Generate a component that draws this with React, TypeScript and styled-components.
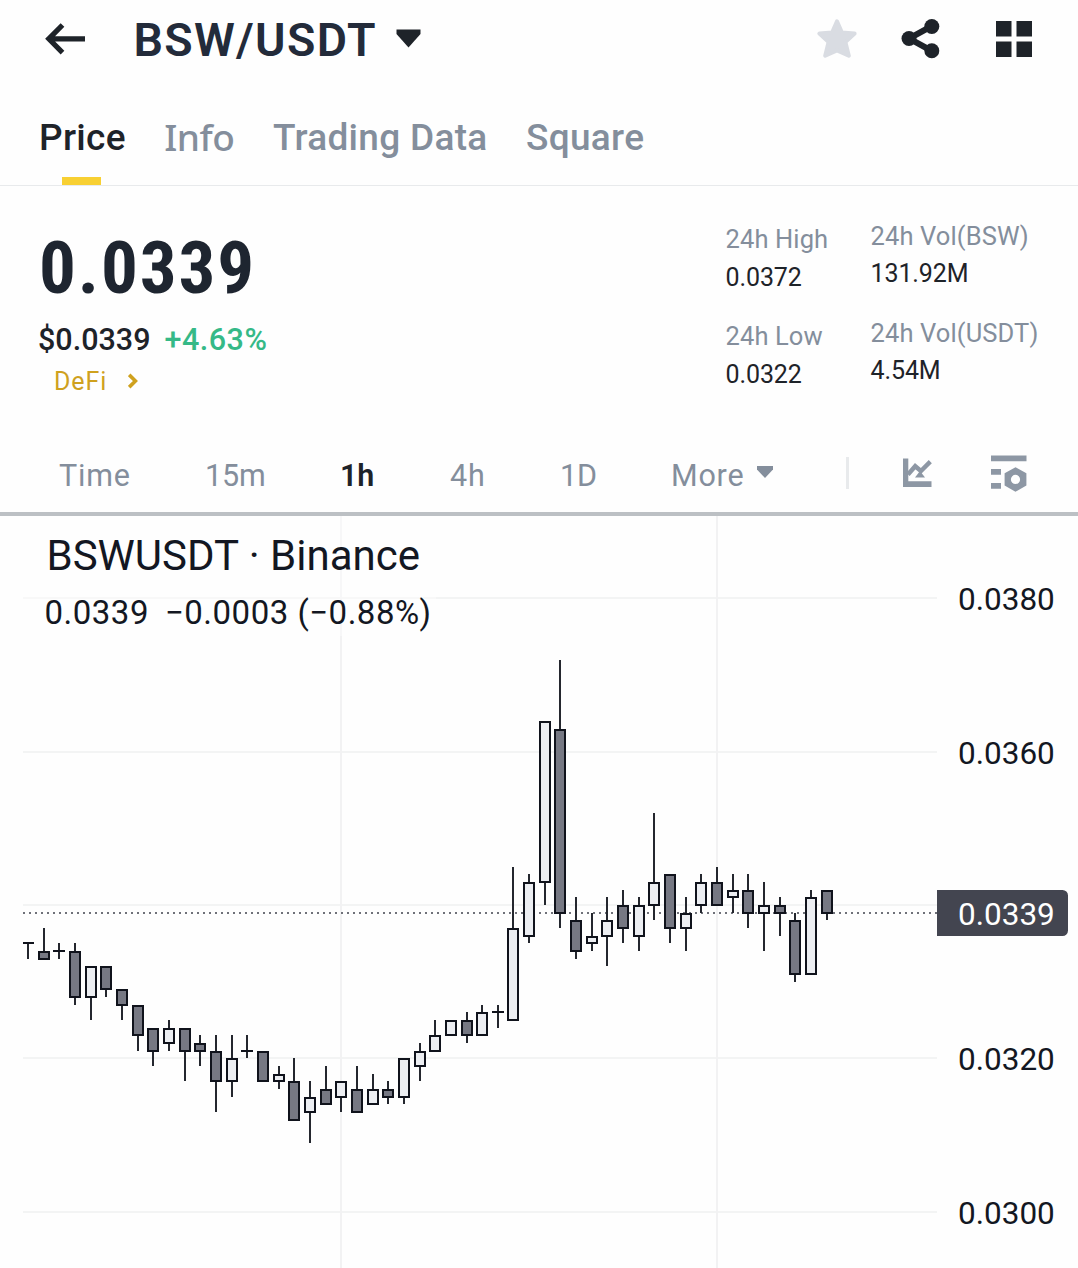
import React from 'react';
import styled, { createGlobalStyle } from 'styled-components';

const GlobalStyle = createGlobalStyle`
  * { box-sizing: border-box; }
  body { margin: 0; background: #fefefe; }
`;

const Screen = styled.main`
  width: 1078px;
  height: 1268px;
  overflow: hidden;
  display: flex;
  flex-direction: column;
  background: #fefefe;
  color: #1e2329;
  font-family: Roboto, "Liberation Sans", sans-serif;
  white-space: nowrap;
  svg { display: block; flex: none; }
`;

const Header = styled.header`
  display: flex;
  align-items: center;
  height: 77px;
  padding: 0 46.5px 0 45px;
`;

const PairTitle = styled.h1`
  margin: 0 19px 0 47.5px;
  padding-top: 3px;
  font-size: 46.5px;
  font-weight: 560;
  line-height: 56px;
  letter-spacing: 1.3px;
  color: #232b3a;
`;

const HeaderActions = styled.div`
  display: flex;
  align-items: center;
  margin-left: auto;
`;

const ActionIcon = styled.div<{ $gap?: number }>`
  margin-left: ${(p) => p.$gap ?? 0}px;
`;

const Tabs = styled.nav`
  display: flex;
  gap: 38.5px;
  height: 109px;
  padding: 39px 39px 0;
  border-bottom: 1px solid #e8eaec;
`;

const Tab = styled.div<{ $active?: boolean; $serifed?: boolean }>`
  position: relative;
  font-family: ${(p) => (p.$serifed ? '"Noto Sans", ' : '')}Roboto, sans-serif;
  font-size: 37px;
  font-weight: ${(p) => (p.$serifed ? 500 : 460)};
  line-height: ${(p) => (p.$serifed ? 42 : 44)}px;
  letter-spacing: ${(p) => (p.$serifed ? -0.5 : 0.3)}px;
  color: ${(p) => (p.$active ? '#1e2329' : '#848e9c')};
`;

const TabMarker = styled.span`
  position: absolute;
  left: 23px;
  bottom: 0;
  width: 39px;
  height: 8px;
  background: #f8d033;
`;

const Summary = styled.section`
  display: flex;
  justify-content: space-between;
  height: 248px;
  padding: 35px 39.5px 0 39px;
`;

const PriceBlock = styled.div`
  padding-top: 7px;
`;

const LastPrice = styled.div`
  font-size: 73px;
  font-weight: 700;
  font-stretch: 75%;
  line-height: 80px;
  letter-spacing: 1.9px;
  color: #1e2530;
`;

const FiatRow = styled.div`
  display: flex;
  gap: 14px;
  margin: 14px 0 0 -1px;
  font-size: 30.5px;
  font-weight: 500;
  line-height: 36px;
`;

const Change = styled.span`
  letter-spacing: 0.5px;
  color: #35b987;
`;

const TagLink = styled.div`
  display: flex;
  align-items: center;
  gap: 21px;
  margin-top: 9px;
  padding-left: 15px;
  font-size: 25px;
  line-height: 30px;
  letter-spacing: 0.9px;
  color: #cfa11e;
  svg { margin-top: -3px; }
`;

const StatColumns = styled.div`
  display: flex;
`;

const StatColumn = styled.div<{ $width: number; $offset?: number }>`
  width: ${(p) => p.$width}px;
  padding-top: ${(p) => p.$offset ?? 0}px;
`;

const Stat = styled.dl<{ $height: number }>`
  margin: 0;
  height: ${(p) => p.$height}px;
`;

const StatLabel = styled.dt`
  font-size: 25.5px;
  line-height: 30px;
  letter-spacing: 0.12px;
  color: #848e9c;
`;

const StatValue = styled.dd<{ $gap: number }>`
  margin: ${(p) => p.$gap}px 0 0;
  font-size: 25px;
  line-height: 30px;
  letter-spacing: -0.1px;
`;

const IntervalBar = styled.div`
  display: flex;
  align-items: center;
  height: 82px;
  padding: 0 51px 0 59px;
  border-bottom: 4px solid #bcc0c4;
`;

const Intervals = styled.div`
  display: grid;
  grid-template-columns: 146px 135px 110px 110px 111px auto;
  padding-top: 5px;
`;

const Interval = styled.div<{ $active?: boolean; $tight?: boolean }>`
  display: flex;
  align-items: center;
  gap: 13px;
  font-size: 30.5px;
  font-weight: ${(p) => (p.$active ? 600 : 400)};
  line-height: 36px;
  letter-spacing: ${(p) => (p.$tight ? -0.1 : 0.8)}px;
  color: ${(p) => (p.$active ? '#1e2329' : '#848e9c')};
  svg { margin-top: -8px; }
`;

const BarTools = styled.div`
  display: flex;
  align-items: center;
  margin-left: auto;
`;

const Divider = styled.span`
  width: 3px;
  height: 32px;
  margin-right: 54px;
  background: #e8eaec;
`;

const ToolGap = styled.span`
  width: 59px;
`;

const ChartArea = styled.section`
  position: relative;
  flex: 1;
`;

const Legend = styled.div`
  position: absolute;
  left: 0;
  top: 0;
  padding: 12px 4px 0 47px;
  background: rgba(255, 255, 255, 0.4);
  color: #131722;
`;

const LegendTitle = styled.div`
  font-size: 42px;
  line-height: 56px;
  margin-left: -0.5px;
`;

const LegendValues = styled.div`
  display: flex;
  gap: 16px;
  padding-top: 6px;
  font-size: 33px;
  line-height: 46px;
  letter-spacing: 0.5px;
  margin-left: -2.5px;
`;

/* Prices are in units of 0.0001: [open, high, low, close] */
type Candle = [number, number, number, number];

const candles: Candle[] = [
  [335, 335, 333, 335], [334, 337, 333, 333], [334, 335, 333, 334], [334, 335, 327, 328],
  [328, 332, 325, 332], [332, 332, 328, 329], [329, 329, 325, 327], [327, 327, 321, 323],
  [324, 324, 319, 321], [322, 325, 321, 324], [324, 324, 317, 321], [322, 323, 319, 321],
  [321, 323, 313, 317], [317, 323, 315, 320], [321, 323, 320, 321], [321, 321, 317, 317],
  [317, 319, 316, 318], [317, 320, 312, 312], [313, 317, 309, 315], [316, 319, 314, 314],
  [315, 317, 313, 317], [316, 319, 313, 313], [314, 318, 314, 316], [316, 317, 314, 315],
  [315, 320, 314, 320], [319, 322, 317, 321], [321, 325, 321, 323], [323, 325, 323, 325],
  [325, 326, 322, 323], [323, 327, 323, 326], [326, 327, 324, 326], [325, 345, 325, 337],
  [336, 344, 335, 343], [343, 364, 340, 364], [363, 372, 337, 339], [338, 341, 333, 334],
  [335, 339, 334, 336], [336, 341, 332, 338], [340, 342, 335, 337], [336, 341, 334, 340],
  [340, 352, 338, 343], [344, 344, 335, 337], [337, 341, 334, 339], [340, 344, 339, 343],
  [343, 345, 340, 340], [341, 344, 339, 342], [342, 344, 337, 339], [339, 343, 334, 340],
  [340, 341, 336, 339], [338, 339, 330, 331], [331, 342, 331, 341], [342, 342, 338, 339],
];

const CHART_HEIGHT = 752;
const priceY = (p: number) => Math.floor(82.4 + (380 - p) * 7.67 + 0.35);
const candleX = (i: number) => Math.round(28 + i * 15.661);

function CandleMark({ index, candle }: { index: number; candle: Candle }) {
  const [open, high, low, close] = candle;
  const x = candleX(index);
  const top = priceY(Math.max(open, close));
  const bottom = priceY(Math.min(open, close));
  return (
    <g>
      <rect x={x - 1} y={priceY(high)} width={2} height={priceY(low) - priceY(high)} fill="#24272e" />
      {open === close ? (
        <rect x={index === 0 ? 23 : x - 6} y={top - 1} width={index === 0 ? 11 : 12} height={2} fill="#10131c" />
      ) : (
        <rect
          x={x - 5} y={top + 1} width={10} height={bottom - top - 1}
          fill={close < open ? '#767883' : '#eceef2'} stroke="#10131c" strokeWidth={2}
        />
      )}
    </g>
  );
}

function CandleChart() {
  const last = priceY(339);
  return (
    <svg width={1078} height={CHART_HEIGHT} viewBox={`0 0 1078 ${CHART_HEIGHT}`} shapeRendering="crispEdges">
      {[380, 360, 340, 320, 300].map((p) => (
        <rect key={p} x={23} y={priceY(p) - 1} width={914} height={2} fill="#f3f4f4" />
      ))}
      {[20, 44].map((i) => (
        <rect key={i} x={candleX(i) - 1} y={0} width={2} height={CHART_HEIGHT} fill="#f2f2f3" />
      ))}
      <line x1={23} x2={937} y1={last} y2={last} stroke="#6f7179" strokeWidth={2} strokeDasharray="2 4" />
      {candles.map((c, i) => <CandleMark key={i} index={i} candle={c} />)}
      <path
        d={`M937 ${last - 23}h125.500a5.500 5.500 0 0 1 5.500 5.500v35a5.500 5.500 0 0 1 -5.500 5.500H937z`}
        fill="#434550" shapeRendering="auto"
      />
      <g fontFamily="Roboto, sans-serif" fontSize={31.5} fill="#131722">
        {[380, 360, 320, 300].map((p) => (
          <text key={p} x={958} y={priceY(p) + 12}>{`0.0${p}`}</text>
        ))}
        <text x={958} y={last + 12} fill="#fff">0.0339</text>
      </g>
    </svg>
  );
}

const BackArrow = () => (
  <svg width="41" height="32" viewBox="0 0 41 32" fill="none" stroke="#1e2329" strokeWidth="5.200">
    <path d="M4 15.800h36M17.500 2L3.800 15.800 17.500 29.600" />
  </svg>
);

const PairCaret = () => (
  <svg width="25" height="19" viewBox="0 0 25 19" fill="#1e2329">
    <path d="M.5.5h24v4.500L12.500 18.500.5 5z" />
  </svg>
);

const MoreCaret = () => (
  <svg width="16" height="12" viewBox="0 0 16 12" fill="#848e9c">
    <path d="M0 0h16v3.500L8 12 0 3.500z" />
  </svg>
);

const Star = () => (
  <svg width="40" height="40" viewBox="0 0 40 40" fill="#d9dce2" stroke="#d9dce2" strokeWidth="4" strokeLinejoin="round">
    <path d="M20 2.300l4.900 11.300 12.700.9-9.200 8.600 3.400 13.600L20 31.400 8.200 36.700l3.400-13.600-9.200-8.600 12.700-.9z" />
  </svg>
);

const Share = () => (
  <svg width="39" height="40" viewBox="0 0 39 40" fill="#1e2329">
    <path d="M30 7.500L8 19.500l22 12" fill="none" stroke="#1e2329" strokeWidth="6" />
    <circle cx="30.800" cy="7.500" r="7.500" />
    <circle cx="8" cy="19.500" r="7.500" />
    <circle cx="30.800" cy="31.700" r="7.500" />
  </svg>
);

const Apps = () => (
  <svg width="36" height="36" viewBox="0 0 36 36" fill="#1e2329">
    <path d="M0 0h15.500v15.500H0zM20.500 0H36v15.500H20.500zM0 20.500h15.500V36H0zM20.500 20.500H36V36H20.500z" />
  </svg>
);

const Chevron = () => (
  <svg width="10" height="16" viewBox="0 0 10 16" fill="none" stroke="#cfa11e" strokeWidth="3.600">
    <path d="M1.200 1.800L7.400 8l-6.200 6.200" />
  </svg>
);

const ChartTool = () => (
  <svg width="29" height="30" viewBox="0 0 29 30" fill="#8d97a4">
    <path d="M0 .5h5.300v22.800H28.500V29H0z" />
    <path d="M5 16.500l7.200-8.300 5.700 4.800 9.400-9.400" fill="none" stroke="#8d97a4" strokeWidth="4.400" />
    <path d="M17 13l5 6.500H12z" />
  </svg>
);

const SettingsTool = () => (
  <svg width="36" height="37" viewBox="0 0 36 37" fill="#8d97a4">
    <path d="M0 .5h35.500v5.700H0zM0 14h10v5.700H0zM0 28h10v5.700H0z" />
    <path fillRule="evenodd" d="M24.500 12.200l10.900 6.100v12.200l-10.900 6.200-10.900-6.200V18.300zM24.500 19.800a4.600 4.600 0 1 0 0 9.200 4.600 4.600 0 0 0 0-9.200z" />
  </svg>
);

const stats = [
  { width: 145, offset: 3, pitch: 97, gap: 9, items: [['24h High', '0.0372'], ['24h Low', '0.0322']] },
  { width: 168, offset: 0, pitch: 96.5, gap: 8, items: [['24h Vol(BSW)', '131.92M'], ['24h Vol(USDT)', '4.54M']] },
];

export default function App() {
  return (
    <Screen>
      <GlobalStyle />
      <Header>
        <BackArrow />
        <PairTitle>BSW/USDT</PairTitle>
        <PairCaret />
        <HeaderActions>
          <ActionIcon><Star /></ActionIcon>
          <ActionIcon $gap={44}><Share /></ActionIcon>
          <ActionIcon $gap={55.5}><Apps /></ActionIcon>
        </HeaderActions>
      </Header>
      <Tabs>
        <Tab $active>Price<TabMarker /></Tab>
        <Tab $serifed>Info</Tab>
        <Tab>Trading Data</Tab>
        <Tab>Square</Tab>
      </Tabs>
      <Summary>
        <PriceBlock>
          <LastPrice>0.0339</LastPrice>
          <FiatRow><span>$0.0339</span><Change>+4.63%</Change></FiatRow>
          <TagLink>DeFi<Chevron /></TagLink>
        </PriceBlock>
        <StatColumns>
          {stats.map((col) => (
            <StatColumn key={col.width} $width={col.width} $offset={col.offset}>
              {col.items.map(([label, value]) => (
                <Stat key={label} $height={col.pitch}>
                  <StatLabel>{label}</StatLabel>
                  <StatValue $gap={col.gap}>{value}</StatValue>
                </Stat>
              ))}
            </StatColumn>
          ))}
        </StatColumns>
      </Summary>
      <IntervalBar>
        <Intervals>
          <Interval>Time</Interval>
          <Interval $tight>15m</Interval>
          <Interval $active $tight>1h</Interval>
          <Interval>4h</Interval>
          <Interval $tight>1D</Interval>
          <Interval>More<MoreCaret /></Interval>
        </Intervals>
        <BarTools>
          <Divider />
          <ChartTool />
          <ToolGap />
          <SettingsTool />
        </BarTools>
      </IntervalBar>
      <ChartArea>
        <CandleChart />
        <Legend>
          <LegendTitle>BSWUSDT · Binance</LegendTitle>
          <LegendValues><span>0.0339</span><span>−0.0003 (−0.88%)</span></LegendValues>
        </Legend>
      </ChartArea>
    </Screen>
  );
}
